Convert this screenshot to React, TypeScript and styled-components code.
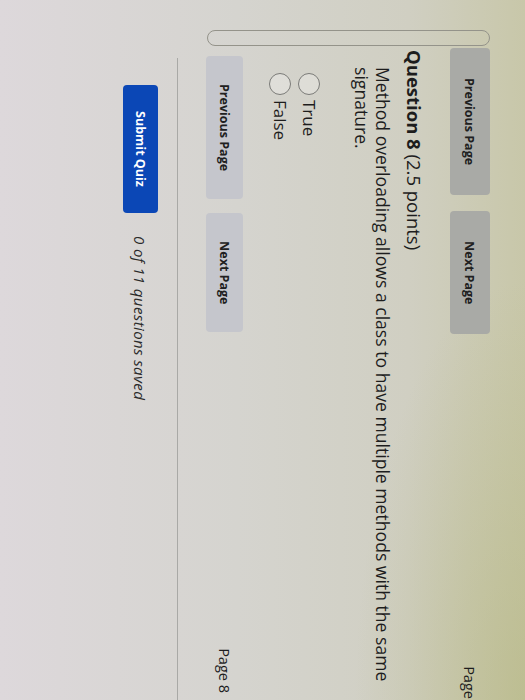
import React from 'react';
import styled, { createGlobalStyle } from 'styled-components';

const GlobalStyle = createGlobalStyle`
  html, body {
    margin: 0;
    padding: 0;
    overflow: hidden;
    background: #d6d4d2;
  }
`;

const Stage = styled.div`
  width: 525px;
  height: 700px;
  overflow: hidden;
  position: relative;
`;

// the photo shows a landscape screen turned on its side
const Screen = styled.div`
  width: 700px;
  height: 525px;
  transform-origin: 0 0;
  transform: translateX(525px) rotate(90deg);
  display: flex;
  font-family: 'Open Sans', Lato, 'Liberation Sans', sans-serif;
  color: #1d1d1d;
  background:
    radial-gradient(ellipse 420px 170px at 700px 0px, rgba(178, 180, 122, 0.5), rgba(178, 180, 122, 0) 100%),
    linear-gradient(to bottom, #c8c7a9 0%, #d0cfc2 22%, #d5d4cf 55%, #ddd8db 100%);
`;

const Rail = styled.div`
  flex-shrink: 0;
  width: 16px;
  height: 283px;
  margin: 35px 0 0 30px;
  box-sizing: border-box;
  border: 1.5px solid #94938a;
  border-radius: 8px;
`;

const Main = styled.div`
  flex: 1;
  display: flex;
  flex-direction: column;
  padding: 35px 0 0 2px;
  min-width: 0;
`;

const NavRow = styled.div<{ $indent?: number }>`
  display: flex;
  align-items: center;
  gap: ${(p) => (p.$indent ? 14 : 16)}px;
  padding-left: ${(p) => p.$indent ?? 0}px;
`;

const NavButton = styled.div<{ $muted?: boolean }>`
  display: flex;
  align-items: center;
  justify-content: center;
  height: ${(p) => (p.$muted ? 37 : 40)}px;
  padding: 0 ${(p) => (p.$muted ? 28 : 30)}px;
  border-radius: 4px;
  background: ${(p) => (p.$muted ? '#c5c6cc' : '#a9aaa6')};
  font-size: 12.5px;
  font-weight: 700;
  color: #202020;
  white-space: nowrap;
`;

const PageLabel = styled.div<{ $offset: number }>`
  margin-left: auto;
  margin-right: ${(p) => p.$offset}px;
  font-size: 14.5px;
  white-space: nowrap;
`;

const QuestionTitle = styled.div`
  margin-top: 23px;
  margin-left: 2px;
  font-size: 18.5px;
  line-height: 25px;

  b {
    font-weight: 700;
  }
`;

const QuestionText = styled.div`
  margin-top: 9px;
  padding-left: 19px;
  max-width: 630px;
  font-size: 17.6px;
  line-height: 21px;
`;

const Options = styled.div`
  margin-top: 27px;
  padding-left: 25px;
  display: flex;
  flex-direction: column;
`;

const Option = styled.label`
  display: flex;
  align-items: center;
  gap: 5px;
  height: 29px;
  font-size: 17px;
`;

const Radio = styled.span`
  width: 22px;
  height: 22px;
  box-sizing: border-box;
  border-radius: 50%;
  border: 1.5px solid #7b7b78;
  background: rgba(255, 255, 255, 0.25);
`;

const Divider = styled.div`
  margin: 28px 0 0 10px;
  height: 1px;
  background: #a9a9a6;
`;

const SubmitRow = styled.div`
  display: flex;
  align-items: center;
  gap: 23px;
  margin-top: 19px;
  padding-left: 37px;
`;

const SubmitButton = styled.div`
  display: flex;
  align-items: center;
  justify-content: center;
  width: 128px;
  height: 35px;
  border-radius: 4px;
  background: #0b47b6;
  color: #fff;
  font-size: 12.5px;
  font-weight: 700;
`;

const SavedNote = styled.div`
  font-size: 15px;
  letter-spacing: 0.4px;
  font-style: italic;
  color: #2a2a2a;
`;

export default function App() {
  return (
    <Stage>
      <GlobalStyle />
      <Screen>
        <Rail />
        <Main>
          <NavRow>
            <NavButton>Previous Page</NavButton>
            <NavButton>Next Page</NavButton>
            <PageLabel $offset={-11}>Page 8</PageLabel>
          </NavRow>

          <QuestionTitle>
            <b>Question 8</b> (2.5 points)
          </QuestionTitle>
          <QuestionText>
            Method overloading allows a class to have multiple methods with the same signature.
          </QuestionText>

          <Options>
            <Option>
              <Radio />
              True
            </Option>
            <Option>
              <Radio />
              False
            </Option>
          </Options>

          <NavRow $indent={8} style={{ marginTop: 23 }}>
            <NavButton $muted>Previous Page</NavButton>
            <NavButton $muted>Next Page</NavButton>
            <PageLabel $offset={7}>Page 8</PageLabel>
          </NavRow>

          <Divider />

          <SubmitRow>
            <SubmitButton>Submit Quiz</SubmitButton>
            <SavedNote>0 of 11 questions saved</SavedNote>
          </SubmitRow>
        </Main>
      </Screen>
    </Stage>
  );
}
